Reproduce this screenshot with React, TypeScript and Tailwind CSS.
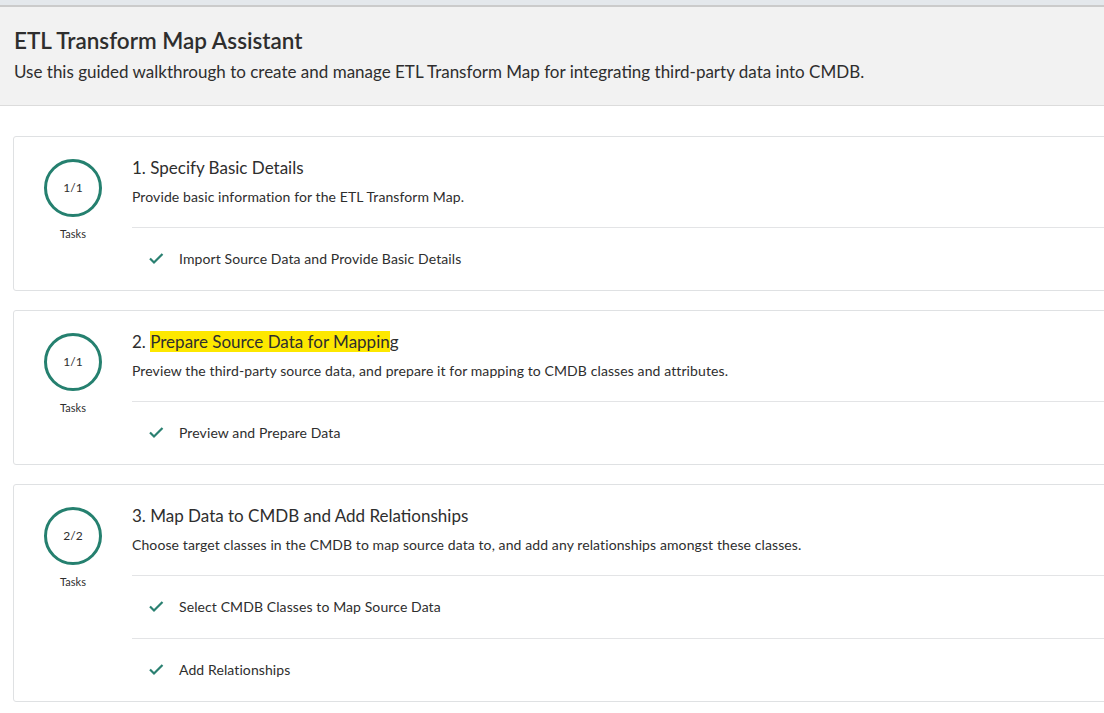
import React from "react";

const Check = () => (
  <svg width="16" height="16" viewBox="0 0 16 16" className="shrink-0">
    <path d="M2 8.5 L6 12.5 L14.5 4" fill="none" stroke="#2a8071" strokeWidth="2.2" strokeLinecap="butt" strokeLinejoin="miter" />
  </svg>
);

type Step = {
  n: string;
  title: React.ReactNode;
  desc: string;
  tasks: string[];
};

const steps: Step[] = [
  {
    n: "1/1",
    title: <>1. Specify Basic Details</>,
    desc: "Provide basic information for the ETL Transform Map.",
    tasks: ["Import Source Data and Provide Basic Details"],
  },
  {
    n: "1/1",
    title: (
      <>
        2. <span className="bg-[#fde800]">Prepare Source Data for Mappin</span>g
      </>
    ),
    desc: "Preview the third-party source data, and prepare it for mapping to CMDB classes and attributes.",
    tasks: ["Preview and Prepare Data"],
  },
  {
    n: "2/2",
    title: <>3. Map Data to CMDB and Add Relationships</>,
    desc: "Choose target classes in the CMDB to map source data to, and add any relationships amongst these classes.",
    tasks: ["Select CMDB Classes to Map Source Data", "Add Relationships"],
  },
];

function Card({ s }: { s: Step }) {
  return (
    <div className="flex border border-[#dfe1e3] rounded-[3px] bg-white mr-[-4px]">
      <div className="w-[118px] shrink-0 flex flex-col items-center pt-[22px]">
        <div className="w-[58px] h-[58px] rounded-full border-[3px] border-[#25806f] flex items-center justify-center text-[12px] text-[#2e2e2e]">
          {s.n}
        </div>
        <div className="mt-[11px] text-[11px] text-[#2e2e2e] leading-none">Tasks</div>
      </div>
      <div className="flex-1 flex flex-col">
        <div className="pt-[19px] pb-[21px]">
          <div className="text-[17px] leading-[24px] text-[#2e2e2e]">{s.title}</div>
          <div className="mt-[8px] text-[14px] leading-[18px] tracking-[0.1px] text-[#2e2e2e]">{s.desc}</div>
        </div>
        {s.tasks.map((t) => (
          <div key={t} className="border-t border-[#e3e4e6] h-[63px] pb-[2px] flex items-center pl-[16px] gap-[15px] text-[14px] tracking-[0.1px] text-[#2e2e2e]">
            <Check />
            <span>{t}</span>
          </div>
        ))}
      </div>
    </div>
  );
}

export default function App() {
  return (
    <div className="min-h-[713px] bg-white font-['Lato',sans-serif] text-[#2e2e2e] overflow-hidden">
      <div className="h-[5px] bg-[#e4e8ec] border-b-2 border-[#cbcbcb] box-content" />
      <div className="bg-[#f2f2f2] border-b border-[#dcdcdc] px-[14px] pt-[20px] h-[99px]">
        <h1 className="text-[22.5px] leading-[28px] font-semibold text-[#2e2e2e]">ETL Transform Map Assistant</h1>
        <p className="mt-[6px] text-[17px] leading-[22px] text-[#2e2e2e]">
          Use this guided walkthrough to create and manage ETL Transform Map for integrating third-party data into CMDB.
        </p>
      </div>
      <div className="pl-[13px] pt-[30px] flex flex-col gap-[19px]">
        {steps.map((s, i) => (
          <Card key={i} s={s} />
        ))}
      </div>
    </div>
  );
}
